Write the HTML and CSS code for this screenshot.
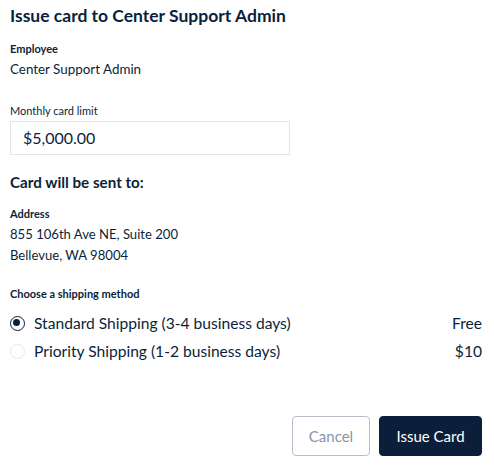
FILE: index.html
```html
<!DOCTYPE html>
<html>
<head>
<meta charset="utf-8">
<link rel="stylesheet" href="styles.css">
</head>
<body>
<div class="dialog">
  <h1 class="title">Issue card to Center Support Admin</h1>
  <div class="field">
    <div class="label-bold">Employee</div>
    <div class="value">Center Support Admin</div>
  </div>
  <div class="field limit">
    <div class="label">Monthly card limit</div>
    <div class="input">$5,000.00</div>
  </div>
  <h2 class="subtitle">Card will be sent to:</h2>
  <div class="field">
    <div class="label-bold">Address</div>
    <div class="value addr">855 106th Ave NE, Suite 200<br>Bellevue, WA 98004</div>
  </div>
  <div class="field shipping">
    <div class="label-bold">Choose a shipping method</div>
    <div class="options">
      <div class="option">
        <span class="radio checked"></span>
        <span class="opt-text">Standard Shipping (3-4 business days)</span>
        <span class="price">Free</span>
      </div>
      <div class="option">
        <span class="radio"></span>
        <span class="opt-text">Priority Shipping (1-2 business days)</span>
        <span class="price">$10</span>
      </div>
    </div>
  </div>
  <div class="actions">
    <button class="btn cancel">Cancel</button>
    <button class="btn primary">Issue Card</button>
  </div>
</div>
</body>
</html>
```
FILE: styles.css
```css
html, body { margin: 0; padding: 0; background: #fff; }
body {
  font-family: Lato, "Open Sans", sans-serif;
  color: #0b1f3a;
}
.dialog {
  padding: 4px 12px 0 10px;
  display: flex;
  flex-direction: column;
}
.title {
  font-size: 17.5px;
  font-weight: 700;
  margin: 0;
  line-height: 24px;
}
.field { display: flex; flex-direction: column; }
.label-bold {
  font-size: 11px;
  font-weight: 700;
  line-height: 14px;
  margin-top: 14px;
}
.value {
  font-size: 13.4px;
  line-height: 21px;
  margin-top: 3px;
}
.addr { font-size: 13.1px; margin-top: 3px; }
.label {
  font-size: 11px;
  line-height: 14px;
  margin-top: 24px;
}
.input {
  margin-top: 3px;
  width: 254px;
  height: 32px;
  border: 1px solid #e3e4ea;
  padding: 0 12px;
  font-size: 16px;
  line-height: 32px;
}
.subtitle {
  font-size: 15.2px;
  font-weight: 700;
  margin: 16px 0 0;
  line-height: 22px;
}
.shipping .label-bold { margin-top: 21px; }
.options {
  display: flex;
  flex-direction: column;
  margin-top: 8px;
}
.option {
  display: flex;
  align-items: center;
  height: 28px;
  font-size: 15.6px;
}
.radio {
  width: 15px;
  height: 15px;
  border-radius: 50%;
  border: 1px solid #e6e8ed;
  box-sizing: border-box;
  margin-right: 9px;
  position: relative;
  flex: none;
}
.radio.checked {
  border: 1.6px solid #0b1f3a;
}
.radio.checked::after {
  content: "";
  position: absolute;
  left: 2.4px; top: 2.4px;
  width: 7px; height: 7px;
  border-radius: 50%;
  background: #0b1f3a;
}
.opt-text { flex: 1; }
.price { text-align: right; }
.actions {
  display: flex;
  justify-content: flex-end;
  gap: 9px;
  margin-top: 51px;
}
.btn {
  font-family: Lato, "Open Sans", sans-serif;
  font-size: 15px;
  height: 40px;
  border-radius: 4px;
  padding: 0;
  cursor: pointer;
}
.cancel {
  width: 78px;
  background: #fff;
  color: #8a94a6;
  border: 1px solid #b8bec9;
}
.primary {
  width: 103px;
  background: #0b1f3a;
  color: #fff;
  border: 1px solid #0b1f3a;
}
```
